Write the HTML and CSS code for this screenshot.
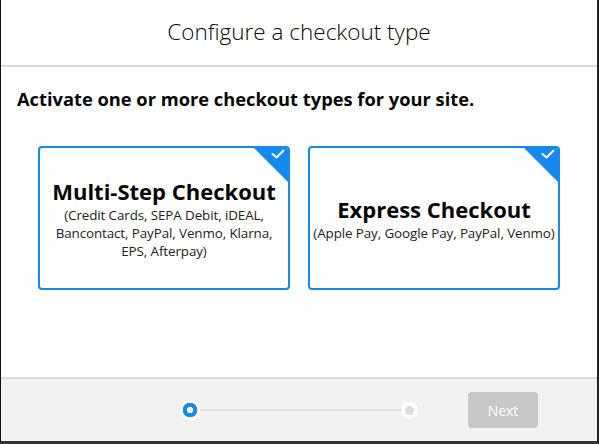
FILE: index.html
```html
<!DOCTYPE html>
<html>
<head>
<meta charset="utf-8">
<link rel="stylesheet" href="styles.css">
</head>
<body>
<div class="modal">
  <header class="head"><h1 class="title">Configure a checkout type</h1></header>
  <main class="body">
    <p class="lead">Activate one or more checkout types for your site.</p>
    <div class="cards">
      <div class="card">
        <span class="corner"><svg class="check" viewBox="0 0 14 10" width="14" height="10"><path d="M1.5 5 L5.5 8.5 L12.5 1.5" fill="none" stroke="#fff" stroke-width="2" stroke-linecap="round" stroke-linejoin="round"/></svg></span>
        <div class="card-title">Multi-Step Checkout</div>
        <div class="card-sub">(Credit Cards, SEPA Debit, iDEAL,<br>Bancontact, PayPal, Venmo, Klarna,<br>EPS, Afterpay)</div>
      </div>
      <div class="card">
        <span class="corner"><svg class="check" viewBox="0 0 14 10" width="14" height="10"><path d="M1.5 5 L5.5 8.5 L12.5 1.5" fill="none" stroke="#fff" stroke-width="2" stroke-linecap="round" stroke-linejoin="round"/></svg></span>
        <div class="card-title">Express Checkout</div>
        <div class="card-sub">(Apple Pay, Google Pay, PayPal, Venmo)</div>
      </div>
    </div>
  </main>
  <footer class="foot">
    <div class="progress">
      <span class="dot active"></span>
      <span class="line"></span>
      <span class="dot"></span>
    </div>
    <button class="next">Next</button>
  </footer>
</div>
</body>
</html>
```
FILE: styles.css
```css
* { box-sizing: border-box; }
html, body { margin: 0; padding: 0; }
body {
  width: 599px;
  height: 444px;
  font-family: "Open Sans", "Liberation Sans", sans-serif;
  color: #080707;
  background: #fff;
}
.modal {
  width: 599px;
  height: 444px;
  border-left: 1px solid #111;
  border-right: 2px solid #222;
  border-bottom: 3px solid #333;
  display: flex;
  flex-direction: column;
}
.head {
  height: 67px;
  border-bottom: 2px solid #dddbda;
  display: flex;
  align-items: center;
  justify-content: center;
}
.title {
  margin: 0;
  font-size: 22.5px;
  font-weight: 300;
  padding-bottom: 2px;
}
.body {
  flex: 1;
  padding: 19px 16px 0 16px;
}
.lead {
  margin: 0;
  font-size: 18.3px;
  font-weight: 700;
  line-height: 26px;
}
.cards {
  display: flex;
  gap: 18px;
  margin-top: 34px;
  padding-left: 21px;
}
.card {
  position: relative;
  width: 252px;
  height: 144px;
  border: 2px solid #1589ee;
  border-radius: 4px;
  display: flex;
  flex-direction: column;
  align-items: center;
  justify-content: center;
  text-align: center;
  overflow: hidden;
}
.corner {
  position: absolute;
  top: 0;
  right: 0;
  width: 0;
  height: 0;
  border-top: 34px solid #1589ee;
  border-left: 34px solid transparent;
}
.check {
  position: absolute;
  top: -33px;
  right: 3px;
}
.card-title {
  font-size: 22px;
  font-weight: 700;
  line-height: 30px;
}
.card-sub {
  font-size: 13.4px;
  line-height: 18.3px;
  color: #222;
  letter-spacing: -0.1px;
  white-space: nowrap;
}
.foot {
  height: 64px;
  border-top: 2px solid #dddbda;
  background: #f3f2f2;
  display: flex;
  align-items: center;
  padding: 0 59px 0 179px;
}
.progress {
  display: flex;
  align-items: center;
  width: 238px;
}
.dot {
  width: 17px;
  height: 17px;
  border-radius: 50%;
  background: #dcdbda;
  border: 4px solid #fff;
  flex: none;
}
.dot.active {
  width: 20px;
  height: 20px;
  border: none;
  background: radial-gradient(circle, #fff 0 3px, #1589ee 3.5px 7px, #fff 7.5px);
}
.line {
  flex: 1;
  height: 2px;
  background: #dddbda;
}
.next {
  margin-left: auto;
  width: 70px;
  height: 36px;
  border: none;
  border-radius: 4px;
  background: #c9c7c5;
  color: #fff;
  font-family: inherit;
  font-size: 14px;
}
```
